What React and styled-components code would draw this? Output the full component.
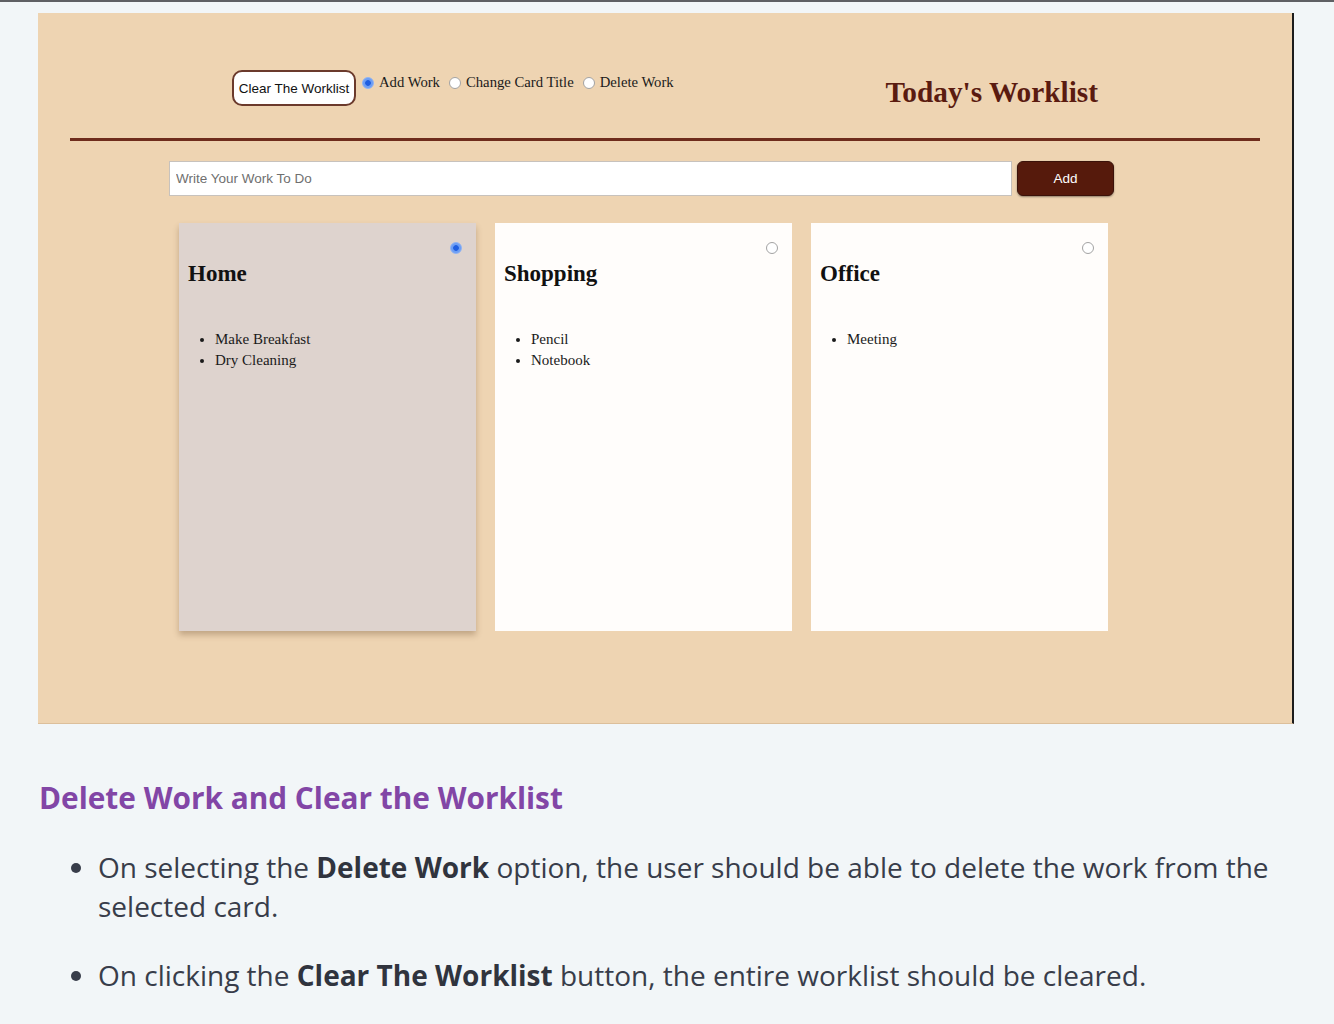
import React from "react";
import styled, { createGlobalStyle } from "styled-components";

const GlobalStyle = createGlobalStyle`
  body {
    margin: 0;
    background: #f2f6f8;
  }
`;

const cards = [
  { title: "Home", items: ["Make Breakfast", "Dry Cleaning"], selected: true },
  { title: "Shopping", items: ["Pencil", "Notebook"] },
  { title: "Office", items: ["Meeting"] },
];

export default function App() {
  return (
    <>
      <GlobalStyle />
      <TopBar />
      <Page>
        <Frame>
          <Header>
            <Controls>
              <ClearButton>Clear The Worklist</ClearButton>
              <Option>
                <Radio type="radio" name="mode" defaultChecked />
                Add Work
              </Option>
              <Option>
                <Radio type="radio" name="mode" />
                Change Card Title
              </Option>
              <Option>
                <Radio type="radio" name="mode" />
                Delete Work
              </Option>
            </Controls>
            <Title>Today's Worklist</Title>
          </Header>
          <Rule />
          <InputRow>
            <WorkInput placeholder="Write Your Work To Do" />
            <AddButton>Add</AddButton>
          </InputRow>
          <CardRow>
            {cards.map((card) => (
              <Card key={card.title} selected={card.selected}>
                <CardTop>
                  <Radio type="radio" name="card" defaultChecked={card.selected} />
                </CardTop>
                <CardTitle>{card.title}</CardTitle>
                <ItemList>
                  {card.items.map((item) => (
                    <li key={item}>{item}</li>
                  ))}
                </ItemList>
              </Card>
            ))}
          </CardRow>
        </Frame>

        <Heading>Delete Work and Clear the Worklist</Heading>
        <Notes>
          <li>
            On selecting the <b>Delete Work</b> option, the user should be able
            to delete the work from the selected card.
          </li>
          <li>
            On clicking the <b>Clear The Worklist</b> button, the entire worklist
            should be cleared.
          </li>
        </Notes>
      </Page>
    </>
  );
}

const TopBar = styled.div`
  height: 2px;
  background: #5f6064;
`;

const Page = styled.div`
  padding: 11px 40px 0 38px;
`;

const Frame = styled.div`
  width: 1256px;
  height: 711px;
  box-sizing: border-box;
  padding-top: 57px;
  background: #eed4b2;
  border-right: 2px solid #1c1c1c;
  border-bottom: 1px solid #dcbf9b;
`;

const Header = styled.div`
  display: flex;
  align-items: flex-start;
  padding: 0 194px 0 194px;
`;

const Controls = styled.div`
  display: flex;
  align-items: flex-start;
`;

const ClearButton = styled.button`
  height: 36px;
  width: 124px;
  padding: 0;
  background: #fff;
  border: 2px solid #6b3a2c;
  border-radius: 10px;
  font-family: "Liberation Sans", Arial, sans-serif;
  font-size: 13.5px;
  color: #111;
`;

const Option = styled.label`
  display: flex;
  align-items: center;
  gap: 5px;
  margin: 4px 0 0 6px;
  font-family: "Liberation Serif", "Times New Roman", serif;
  font-size: 14.7px;
  color: #1a1a1a;
  & + & {
    margin-left: 9px;
  }
`;

const Radio = styled.input`
  appearance: none;
  margin: 0;
  width: 12px;
  height: 12px;
  border-radius: 50%;
  border: 1px solid #a3a3a3;
  background: #fff;
  box-sizing: border-box;
  &:checked {
    border-color: #8db2f4;
    background: radial-gradient(circle, #1f5ee0 0 35%, #6d9ef4 45%);
  }
`;

const Title = styled.h1`
  margin: 4px 0 0 auto;
  font-family: "Liberation Serif", "Times New Roman", serif;
  font-weight: bold;
  font-size: 29.3px;
  line-height: 36px;
  color: #5a1b10;
`;

const Rule = styled.div`
  height: 3px;
  margin: 28px 32px 0 32px;
  background: #6e2c1c;
`;

const InputRow = styled.div`
  display: flex;
  gap: 5px;
  margin: 20px 0 0 131px;
`;

const WorkInput = styled.input`
  width: 843px;
  height: 35px;
  box-sizing: border-box;
  border: 1px solid #c7c2bd;
  background: #fff;
  padding: 0 6px;
  font-family: "Liberation Sans", Arial, sans-serif;
  font-size: 13.5px;
  &::placeholder {
    color: #6f6f6f;
  }
`;

const AddButton = styled.button`
  width: 97px;
  height: 35px;
  background: #561a0c;
  border: 1px solid #3b120a;
  border-radius: 6px;
  color: #fff;
  font-family: "Liberation Sans", Arial, sans-serif;
  font-size: 13.5px;
  box-shadow: 0 1px 2px rgba(0, 0, 0, 0.4);
`;

const CardRow = styled.div`
  display: flex;
  gap: 19px;
  margin: 27px 0 0 141px;
`;

const Card = styled.div`
  width: 297px;
  height: 408px;
  box-sizing: border-box;
  padding: 19px 14px 0 9px;
  background: ${(p) => (p.selected ? "#ded3ce" : "#fffdfb")};
  box-shadow: ${(p) =>
    p.selected ? "0 4px 6px rgba(90, 60, 30, 0.3)" : "none"};
`;

const CardTop = styled.div`
  display: flex;
  justify-content: flex-end;
  height: 12px;
`;

const CardTitle = styled.h2`
  margin: 2px 0 0;
  font-family: "Liberation Serif", "Times New Roman", serif;
  font-weight: bold;
  font-size: 23px;
  line-height: 36px;
  color: #111;
`;

const ItemList = styled.ul`
  margin: 37px 0 0;
  padding-left: 27px;
  font-family: "Liberation Serif", "Times New Roman", serif;
  font-size: 15px;
  line-height: 21px;
  color: #1a1a1a;
`;

const Heading = styled.h2`
  margin: 54px 0 0 1px;
  font-family: "Open Sans", sans-serif;
  font-weight: bold;
  font-size: 29.8px;
  line-height: 40px;
  color: #8246a6;
`;

const Notes = styled.ul`
  margin: 30px 0 0;
  padding-left: 60px;
  font-family: "Open Sans", sans-serif;
  font-size: 28px;
  line-height: 39px;
  color: #383d4a;
  li {
    margin-bottom: 30px;
  }
  b {
    color: #30343e;
  }
`;
